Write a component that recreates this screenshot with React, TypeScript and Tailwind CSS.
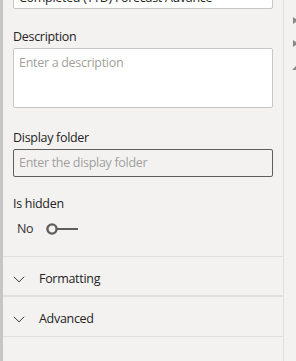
import React from 'react'

const font = { fontFamily: '"Segoe UI", "Open Sans", "Noto Sans", sans-serif' }

function Chevron() {
  return (
    <svg width="12" height="7" viewBox="0 0 12 7" className="shrink-0">
      <path d="M0.8 0.8 L6 5.8 L11.2 0.8" fill="none" stroke="#3b3a39" strokeWidth="1" />
    </svg>
  )
}

function Section({ title, last }: { title: string; last?: boolean }) {
  return (
    <div className={`h-[40px] flex items-center pt-[6px] pl-[10px] ${last ? 'border-b border-[#e1dfdd]' : 'border-b-2 border-[#e1dfdd]'}`}>
      <Chevron />
      <span className="ml-[14px] text-[12.5px] tracking-[-0.3px] text-[#252423]">{title}</span>
    </div>
  )
}

export default function App() {
  return (
    <div className="w-[296px] h-[361px] flex bg-[#f3f2f1] overflow-hidden text-[#252423]" style={font}>
      <div className="w-[3px] shrink-0 bg-[#c8c6c4]" />

      <div className="w-[281px] shrink-0 border-r border-[#e1dfdd]">
        <div className="px-[10px] text-[12.5px] tracking-[-0.3px]">
          <div className="-mt-[13px] h-[22px] bg-white border border-[#c8c6c4] rounded-[2px] px-[5px] leading-[20px] whitespace-nowrap overflow-hidden">
            Completed (YTD) Forecast Advance
          </div>

          <div className="mt-[18px] h-[20px] leading-[20px]">Description</div>
          <div className="mt-[1px] h-[60px] bg-white border border-[#c8c6c4] rounded-[2px] px-[5px] pt-[5px] text-[#a19f9d]">
            Enter a description
          </div>

          <div className="mt-[20px] h-[20px] leading-[20px]">Display folder</div>
          <div className="mt-[1px] h-[28px] border border-[#605e5c] rounded-[2px] px-[5px] flex items-center text-[#a19f9d]">
            Enter the display folder
          </div>

          <div className="mt-[17px] h-[20px] leading-[20px]">Is hidden</div>
          <div className="mt-[5px] h-[20px] flex items-center pl-[4px]">
            <span className="text-[#323130]">No</span>
            <svg width="36" height="14" viewBox="0 0 36 14" className="ml-[12px]">
              <circle cx="7" cy="7" r="4.6" fill="#f3f2f1" stroke="#605e5c" strokeWidth="2.4" />
              <line x1="11.8" y1="7" x2="33" y2="7" stroke="#605e5c" strokeWidth="2" />
            </svg>
          </div>
        </div>

        <div className="mt-[17px] border-t border-[#e1dfdd]">
          <Section title="Formatting" />
          <Section title="Advanced" last />
        </div>
      </div>

      <div className="flex-1 flex flex-col items-end pt-[17px] mr-[-2px]">
        <svg width="5" height="7" viewBox="0 0 5 7"><path d="M0 0 L5 3.5 L0 7 Z" fill="#8a8886" /></svg>
        <svg width="5" height="7" viewBox="0 0 5 7" className="mt-[16px]"><path d="M0 0 L5 3.5 L0 7 Z" fill="#8a8886" /></svg>
        <svg width="6" height="6" viewBox="0 0 6 6" className="mt-[17px]"><path d="M6 0 L6 6 L0 6 Z" fill="#8a8886" /></svg>
      </div>
    </div>
  )
}
